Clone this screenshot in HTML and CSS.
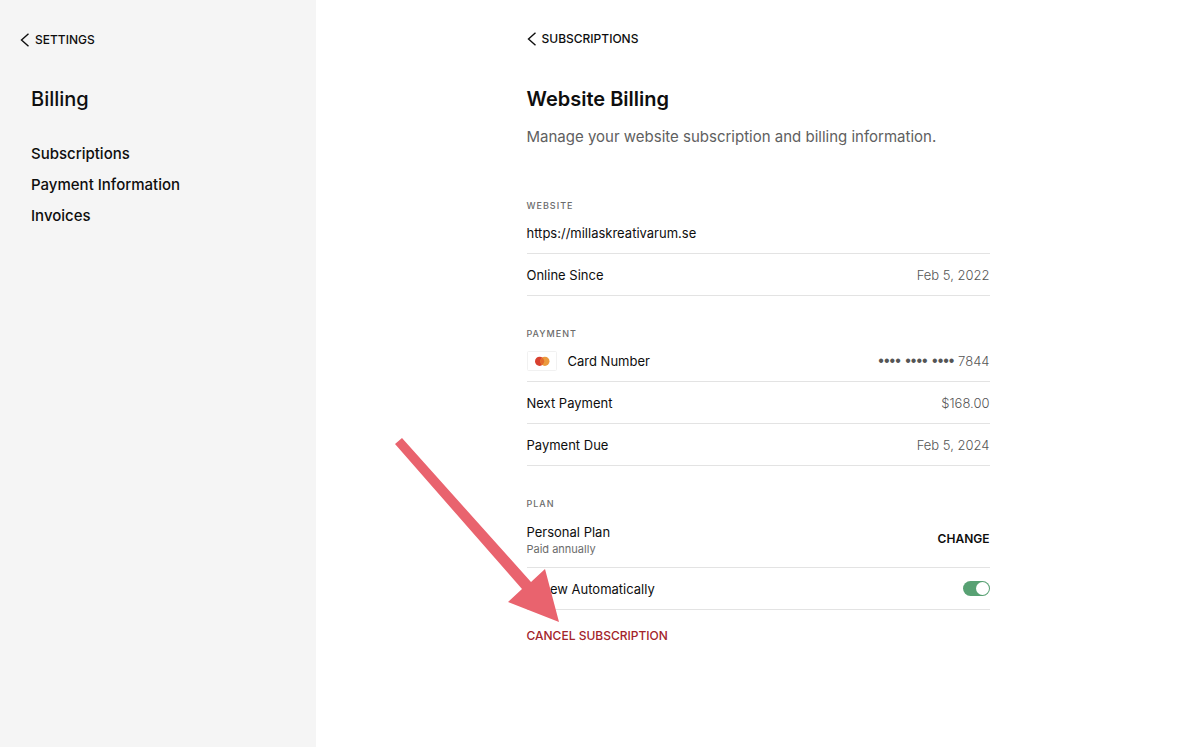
FILE: index.html
```html
<!DOCTYPE html>
<html lang="en">
  <head>
    <meta charset="UTF-8" />
    <meta name="viewport" content="width=device-width, initial-scale=1.0" />
    <title>Website Billing</title>
    <link rel="stylesheet" href="styles.css">
  </head>
  <body>
    <div class="page">
      <aside class="sidebar">
        <a class="back-link" href="#settings">
          <svg class="chevron" viewBox="0 0 10 14" aria-hidden="true"><path d="M8.5 0.7 L1.5 7 L8.5 13.3" /></svg>
          SETTINGS
        </a>
        <h2 class="sidebar-title">Billing</h2>
        <nav class="sidebar-nav">
          <a href="#subscriptions">Subscriptions</a>
          <a href="#payment">Payment Information</a>
          <a href="#invoices">Invoices</a>
        </nav>
      </aside>

      <main class="main">
        <div class="content">
          <a class="back-link" href="#subscriptions">
            <svg class="chevron" viewBox="0 0 10 14" aria-hidden="true"><path d="M8.5 0.7 L1.5 7 L8.5 13.3" /></svg>
            SUBSCRIPTIONS
          </a>
          <h1 class="title">Website Billing</h1>
          <p class="subtitle">Manage your website subscription and billing information.</p>

          <section class="section">
            <h3 class="section-label">WEBSITE</h3>
            <div class="row">
              <span>https://millaskreativarum.se</span>
            </div>
            <div class="row">
              <span>Online Since</span>
              <span class="value">Feb 5, 2022</span>
            </div>
          </section>

          <section class="section">
            <h3 class="section-label">PAYMENT</h3>
            <div class="row">
              <span class="card-name">
                <svg class="card-icon" viewBox="0 0 30 20" role="img" aria-label="Mastercard">
                  <rect x="0.5" y="0.5" width="29" height="19" rx="1" fill="#fff" stroke="#f1f1f1" />
                  <circle cx="12.6" cy="10.3" r="4.6" fill="#d8402f" />
                  <circle cx="17.9" cy="10.3" r="4.6" fill="#eb9a3e" />
                  <path d="M15.25 6.55 a4.6 4.6 0 0 1 0 7.5 a4.6 4.6 0 0 1 0 -7.5z" fill="#e36a2c" />
                </svg>
                Card Number
              </span>
              <span class="value"><span class="dots">•••• •••• ••••</span> 7844</span>
            </div>
            <div class="row">
              <span>Next Payment</span>
              <span class="value">$168.00</span>
            </div>
            <div class="row">
              <span>Payment Due</span>
              <span class="value">Feb 5, 2024</span>
            </div>
          </section>

          <section class="section">
            <h3 class="section-label">PLAN</h3>
            <div class="row plan-row">
              <div>
                <div>Personal Plan</div>
                <div class="plan-note">Paid annually</div>
              </div>
              <button class="change-btn" type="button">CHANGE</button>
            </div>
            <div class="row">
              <label for="renew">Renew Automatically</label>
              <input class="toggle" type="checkbox" id="renew" checked />
            </div>
          </section>

          <button class="cancel-btn" type="button">CANCEL SUBSCRIPTION</button>

          <svg class="arrow" viewBox="0 0 166 186" aria-hidden="true">
            <path d="M1 7 L8 1 L137 145 L151 132 L165 185 L114 165 L128 152 Z" />
          </svg>
        </div>
      </main>
    </div>
  </body>
</html>
```

FILE: styles.css
```css
* {
  box-sizing: border-box;
}
body {
  margin: 0;
  font-family: Inter, "Liberation Sans", sans-serif;
  font-size: 13px;
  line-height: 20px;
  color: #0e0e0e;
  background-color: #ffffff;
}
h1, h2, h3, p {
  margin: 0;
}
a {
  color: inherit;
  text-decoration: none;
}
button {
  padding: 0;
  border: none;
  background: none;
  font-family: inherit;
  cursor: pointer;
}
.page {
  display: flex;
  min-height: 100vh;
}
.sidebar {
  flex: 0 0 316px;
  padding: 30px 20px;
  background-color: #f5f5f5;
}
.back-link {
  display: flex;
  align-items: center;
  gap: 5px;
  font-size: 12px;
  font-weight: 500;
}
.chevron {
  width: 10px;
  height: 14px;
  fill: none;
  stroke: #0e0e0e;
  stroke-width: 1.4;
}
.sidebar-title {
  margin: 34px 0 0 11px;
  font-size: 20px;
  font-weight: 500;
  line-height: 30px;
}
.sidebar-nav {
  display: flex;
  flex-direction: column;
  gap: 11px;
  margin: 30px 0 0 11px;
  font-size: 15px;
  font-weight: 500;
}
.main {
  flex: 1;
  padding: 29px 20px;
}
.content {
  position: relative;
  max-width: 463px;
  margin: 0 auto;
}
.title {
  margin-top: 35px;
  font-size: 20px;
  font-weight: 600;
  line-height: 30px;
}
.subtitle {
  margin-top: 13px;
  font-size: 15px;
  color: #606060;
}
.section {
  margin-top: 32px;
}
.subtitle + .section {
  margin-top: 53px;
}
.section-label {
  font-size: 9px;
  font-weight: 500;
  line-height: 12px;
  letter-spacing: 1px;
  color: #6b6b6b;
}
.row {
  display: flex;
  justify-content: space-between;
  align-items: center;
  height: 42px;
  border-bottom: 1px solid #e3e3e3;
}
.value {
  font-weight: 300;
  color: #555555;
}
.dots {
  font-family: "Liberation Sans", Arial, sans-serif;
  font-size: 16px;
}
.card-name {
  display: flex;
  align-items: center;
  gap: 11px;
}
.card-icon {
  width: 30px;
  height: 20px;
}
.plan-row {
  height: 58px;
}
.plan-note {
  font-size: 11px;
  line-height: 14px;
  color: #6b6b6b;
}
.change-btn {
  font-size: 12px;
  font-weight: 600;
  color: #0e0e0e;
}
.toggle {
  appearance: none;
  display: flex;
  align-items: center;
  width: 27px;
  height: 15px;
  margin: 0;
  padding: 1px;
  border-radius: 8px;
  background-color: #b5b5b5;
  cursor: pointer;
}
.toggle::before {
  content: "";
  width: 13px;
  height: 13px;
  border-radius: 50%;
  background-color: #ffffff;
}
.toggle:checked {
  justify-content: flex-end;
  background-color: #58a173;
}
.cancel-btn {
  margin-top: 16px;
  font-size: 12px;
  font-weight: 500;
  line-height: 20px;
  color: #a3242a;
}
/* pointer drawn over the page, ends at the cancel button */
.arrow {
  position: absolute;
  top: 408px;
  left: -133px;
  width: 166px;
  height: 186px;
  fill: #e9636e;
  pointer-events: none;
}
```
